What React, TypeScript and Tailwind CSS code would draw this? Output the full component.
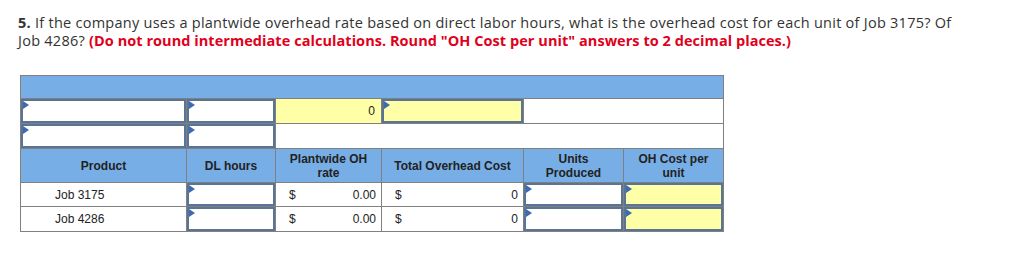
import React from 'react'

const Marker = () => (
  <span className="absolute left-0 top-0 h-0 w-0 border-y-[4px] border-l-[6px] border-y-transparent border-l-[#3d6ab0]" />
)

const InputCell = ({ yellow = false, h = 'h-[24px]' }: { yellow?: boolean; h?: string }) => (
  <td className="border border-[#808080] p-0">
    <div
      className={`relative w-full border-2 border-[#5a7495] ${h} ${
        yellow ? 'bg-[#ffffa8]' : 'bg-white'
      }`}
    >
      <Marker />
    </div>
  </td>
)

const MoneyCell = ({ value }: { value: string }) => (
  <td className="border border-[#808080] px-[5px]">
    <div className="flex justify-between">
      <span className="pl-[8px]">$</span>
      <span>{value}</span>
    </div>
  </td>
)

const App = () => {
  return (
    <div className="h-[270px] w-[1020px] bg-white pt-[14px]">
      <p className="px-[18px] text-[14.5px] leading-[18px] text-[#333] font-['Open_Sans',sans-serif] tracking-[0.26px]">
        <b>5.</b> If the company uses a plantwide overhead rate based on direct
        labor hours, what is the overhead cost for each unit of Job 3175? Of
        <br />
        Job 4286?{' '}
        <b className="text-[#e0001c] tracking-[0.05px]">
          (Do not round intermediate calculations. Round "OH Cost per unit"
          answers to 2 decimal places.)
        </b>
      </p>

      <table className="ml-[20px] mt-[25px] w-[703px] table-fixed border-collapse text-[12px] text-[#222] font-['Liberation_Sans',Arial,sans-serif]">
        <colgroup>
          <col className="w-[166px]" />
          <col className="w-[89px]" />
          <col className="w-[106px]" />
          <col className="w-[142px]" />
          <col className="w-[100px]" />
          <col className="w-[100px]" />
        </colgroup>
        <tbody>
          <tr className="h-[23px] bg-[#78aee6]">
            <td colSpan={6} className="border border-[#808080]" />
          </tr>
          <tr className="h-[25px]">
            <InputCell />
            <InputCell />
            <td className="border border-[#808080] bg-[#ffffa8] px-[6px] text-right">
              0
            </td>
            <InputCell yellow />
            <td colSpan={2} className="border border-[#808080]" />
          </tr>
          <tr className="h-[25px]">
            <InputCell />
            <InputCell />
            <td colSpan={4} className="border border-[#808080]" />
          </tr>
          <tr className="h-[34px] bg-[#78aee6] text-center font-bold leading-[14px]">
            <td className="border border-[#808080]">Product</td>
            <td className="border border-[#808080]">DL hours</td>
            <td className="border border-[#808080]">
              Plantwide OH
              <br />
              rate
            </td>
            <td className="border border-[#808080]">Total Overhead Cost</td>
            <td className="border border-[#808080]">
              Units
              <br />
              Produced
            </td>
            <td className="border border-[#808080]">
              OH Cost per
              <br />
              unit
            </td>
          </tr>
          <tr className="h-[24px]">
            <td className="border border-[#808080] pl-[34px]">Job 3175</td>
            <InputCell h="h-[23px]" />
            <MoneyCell value="0.00" />
            <MoneyCell value="0" />
            <InputCell h="h-[23px]" />
            <InputCell yellow h="h-[23px]" />
          </tr>
          <tr className="h-[25px]">
            <td className="border border-[#808080] pl-[34px]">Job 4286</td>
            <InputCell />
            <MoneyCell value="0.00" />
            <MoneyCell value="0" />
            <InputCell />
            <InputCell yellow />
          </tr>
        </tbody>
      </table>
    </div>
  )
}

export default App
